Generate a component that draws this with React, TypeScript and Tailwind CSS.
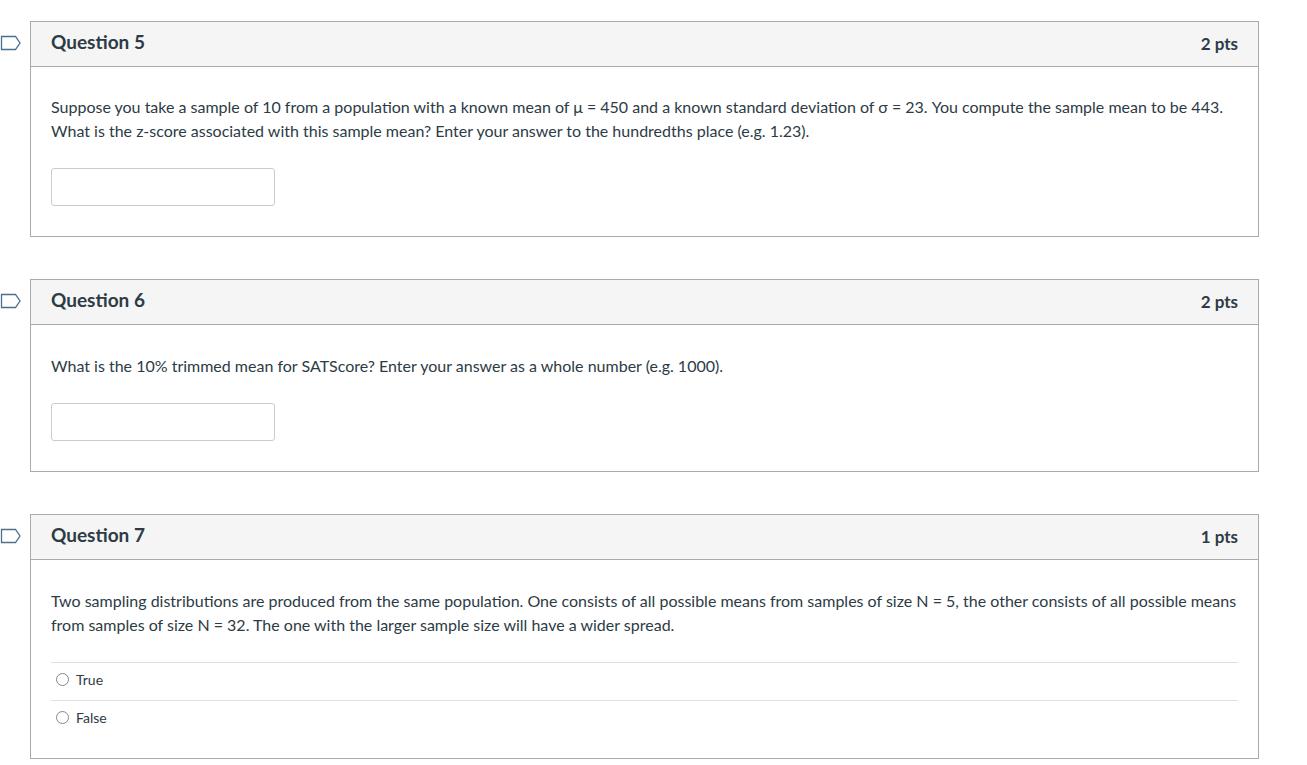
import React from "react";

function Flag() {
  return (
    <div className="absolute left-0 top-[14px] w-[22px] h-[16px]">
      <svg width="22" height="16" viewBox="0 0 22 16">
        <path d="M1.5 1.5 H15.5 L20 8 L15.5 14.5 H1.5 Z" fill="none" stroke="#4b6f8d" strokeWidth="1.3" />
      </svg>
    </div>
  );
}

function Card({
  title,
  pts,
  children,
}: {
  title: string;
  pts: string;
  children: React.ReactNode;
}) {
  return (
    <div className="relative pl-[30px] pr-[48px]">
      <Flag />
      <div className="border border-[#aaaaaa] bg-white">
        <div className="h-[45px] bg-[#f5f5f5] border-b border-[#aaaaaa] flex items-center justify-between pl-[20px] pr-[20px]">
          <div className="text-[19px] font-bold text-[#2d3b45] pb-[3px]">{title}</div>
          <div className="text-[17px] font-bold text-[#2d3b45] pb-[1px]">{pts}</div>
        </div>
        {children}
      </div>
    </div>
  );
}

function Input() {
  return <div className="w-[224px] h-[38px] border border-[#c7cdd1] rounded-[3px] bg-white" />;
}

function Radio({ label }: { label: string }) {
  return (
    <div className="h-[38px] border-t border-[#e0e0e0] flex items-center pl-[5px] pb-[5px]">
      <div className="w-[13px] h-[13px] rounded-full border border-[#888888] bg-white" />
      <span className="ml-[7px] text-[14px] text-[#2d3b45]">{label}</span>
    </div>
  );
}

export default function App() {
  return (
    <div
      className="w-[1307px] min-h-[765px] bg-white pt-[21px] text-[#2d3b45]"
      style={{ fontFamily: "Lato, 'Liberation Sans', sans-serif" }}
    >
      <div className="flex flex-col gap-[42px]">
        <Card title="Question 5" pts="2 pts">
          <div className="px-[20px] pt-[28px] pb-[30px]">
            <p className="text-[16px] leading-[24px]">
              Suppose you take a sample of 10 from a population with a known mean of μ = 450 and a known standard deviation of σ = 23. You compute the sample mean to be 443. What is the z-score associated with this sample mean? Enter your answer to the hundredths place (e.g. 1.23).
            </p>
            <div className="mt-[25px]">
              <Input />
            </div>
          </div>
        </Card>
        <Card title="Question 6" pts="2 pts">
          <div className="px-[20px] pt-[29px] pb-[30px]">
            <p className="text-[16px] leading-[24px]">
              What is the 10% trimmed mean for SATScore? Enter your answer as a whole number (e.g. 1000).
            </p>
            <div className="mt-[25px]">
              <Input />
            </div>
          </div>
        </Card>
        <Card title="Question 7" pts="1 pts">
          <div className="px-[20px] pt-[29px] pb-[20px]">
            <p className="text-[16px] leading-[24px]">
              Two sampling distributions are produced from the same population. One consists of all possible means from samples of size N = 5, the other consists of all possible means from samples of size N = 32. The one with the larger sample size will have a wider spread.
            </p>
            <div className="mt-[25px]">
              <Radio label="True" />
              <Radio label="False" />
            </div>
          </div>
        </Card>
      </div>
    </div>
  );
}
